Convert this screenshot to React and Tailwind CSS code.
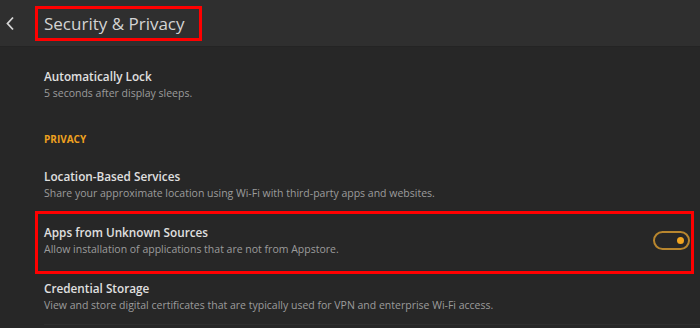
import React from 'react';

const items = [
  { title: 'Location-Based Services', sub: 'Share your approximate location using Wi-Fi with third-party apps and websites.' },
];

function Row({ title, sub, children, highlight }) {
  return (
    <div className="relative flex items-center h-[56px] pl-[44px] pr-[10px]">
      <div className="flex-1">
        <p className="text-[11.75px] leading-[18px] text-[#e0e0e0] font-semibold">{title}</p>
        <p className="text-[10.5px] leading-[16px] text-[#9c9c9c]">{sub}</p>
      </div>
      {children}
      {highlight && (
        <div className="absolute left-[35px] right-[6px] top-[-1px] h-[63px] border-[3px] border-[#ff0000] pointer-events-none" />
      )}
    </div>
  );
}

export default function App() {
  return (
    <div className="w-[700px] h-[328px] overflow-hidden bg-[#272727]" style={{ fontFamily: '"Open Sans", "Noto Sans", sans-serif' }}>
      <div className="h-[47px] bg-[#2f2f2f] border-b border-[#242424] flex items-center">
        <svg width="10" height="15" viewBox="0 0 10 15" className="ml-[5px]">
          <path d="M8 1.5 L2.5 7.5 L8 13.5" fill="none" stroke="#d6d6d6" strokeWidth="1.8" />
        </svg>
        <div className="ml-[20px] h-[35px] w-[167px] border-[3px] border-[#ff0000] flex items-center pl-[6px]">
          <span className="text-[17px] text-[#d4d4d4] leading-none">Security &amp; Privacy</span>
        </div>
      </div>
      <div className="pt-[9px]">
        <Row title="Automatically Lock" sub="5 seconds after display sleeps." />
        <div className="h-[44px] pl-[44px] pt-[20px]">
          <p className="text-[10px] leading-[14px] font-bold text-[#eea11f]">PRIVACY</p>
        </div>
        {items.map((it) => (
          <Row key={it.title} title={it.title} sub={it.sub} />
        ))}
        <Row title="Apps from Unknown Sources" sub="Allow installation of applications that are not from Appstore." highlight>
          <div className="w-[37px] h-[19px] rounded-full border-2 border-[#b8862e] flex items-center justify-end pr-[4px]">
            <div className="w-[7px] h-[7px] rounded-full bg-[#f2a51f]" />
          </div>
        </Row>
        <Row title="Credential Storage" sub="View and store digital certificates that are typically used for VPN and enterprise Wi-Fi access." />
        <div className="ml-[44px] border-t border-[#2e2e2e]" />
      </div>
    </div>
  );
}
